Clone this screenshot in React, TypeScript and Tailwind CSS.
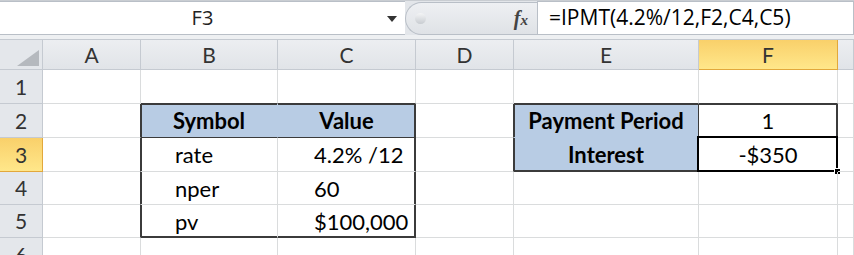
import React from "react";

const cellFont = { fontFamily: "Lato, 'Open Sans', sans-serif" };

type CellProps = { className?: string; children?: React.ReactNode };

// plain worksheet cell with gridlines on right/bottom
const Cell = ({ className = "", children }: CellProps) => (
  <div
    className={`relative flex items-center overflow-visible whitespace-nowrap border-r border-b border-[#dadcdd] text-[22px] text-black ${className}`}
    style={cellFont}
  >
    {children}
  </div>
);

const ColHead = ({ label, active }: { label: string; active?: boolean }) => (
  <div
    className={
      active
        ? "flex items-center justify-center border-r border-b border-[#e2a83b] bg-gradient-to-b from-[#f9d06a] to-[#ffe78a] text-[21px] text-[#333]"
        : "flex items-center justify-center border-r border-b border-[#c5cad1] bg-gradient-to-b from-[#eceef1] to-[#e1e4e8] text-[21px] text-[#333]"
    }
    style={cellFont}
  >
    {label}
  </div>
);

const RowHead = ({ label, active }: { label: string; active?: boolean }) => (
  <div
    className={
      active
        ? "flex items-center justify-center border-r border-b border-[#e2a83b] bg-gradient-to-b from-[#f9d06a] to-[#ffe78a] text-[21px] text-[#333]"
        : "flex items-center justify-center border-r border-b border-[#c5cad1] bg-[#e4e7eb] text-[21px] text-[#333]"
    }
    style={cellFont}
  >
    {label}
  </div>
);

export default function App() {
  return (
    <div className="w-[854px] h-[255px] overflow-hidden bg-white">
      {/* formula bar */}
      <div className="flex h-[35px] border-t border-[#c9cdd2] bg-[#e3e6ea]">
        <div
          className="relative flex w-[405px] items-center justify-center border-y border-[#b9bfc7] bg-white text-[20px] text-[#222]"
          style={{ fontFamily: "'Open Sans', 'Liberation Sans', sans-serif" }}
        >
          F3
          <svg
            className="absolute right-[8px] top-[14px]"
            width="10"
            height="6"
            viewBox="0 0 10 6"
          >
            <path d="M0 0h10L5 6z" fill="#333" />
          </svg>
        </div>
        <div className="flex w-[132px] items-center bg-[#e3e6ea]">
          <div className="flex h-[33px] w-full items-center rounded-l-full border-y border-l border-[#b9bfc7] bg-gradient-to-b from-[#eef0f3] to-[#dfe2e6] pl-[9px]">
            <div className="h-[11px] w-[11px] rounded-full bg-gradient-to-b from-[#f4f5f6] to-[#c8ccd1]" />
            <div className="flex-1" />
            <span
              className="mr-[9px] text-[20px] font-bold italic text-[#444]"
              style={{ fontFamily: "'Liberation Serif', serif" }}
            >
              f<span className="text-[15px]">x</span>
            </span>
          </div>
        </div>
        <div
          className="flex flex-1 items-center border border-[#b9bfc7] bg-white pl-[11px] text-[21px] text-black"
          style={{ fontFamily: "'Open Sans', 'Liberation Sans', sans-serif" }}
        >
          =IPMT(4.2%/12,F2,C4,C5)
        </div>
      </div>
      <div className="h-[5px] border-b border-[#c5cad1] bg-[#eef0f2]" />

      {/* sheet grid */}
      <div className="grid grid-cols-[43px_98px_137px_138px_98px_185px_139px_16px] grid-rows-[30px_34px_34px_34px_33px_33px_34px]">
        {/* header row */}
        <div className="flex items-end justify-end border-r border-b border-[#c5cad1] bg-[#e4e7eb] pb-[3px] pr-[3px]">
          <svg width="22" height="16" viewBox="0 0 22 16">
            <path d="M22 0V16H0z" fill="#b5b9be" />
          </svg>
        </div>
        <ColHead label="A" />
        <ColHead label="B" />
        <ColHead label="C" />
        <ColHead label="D" />
        <ColHead label="E" />
        <ColHead label="F" active />
        <ColHead label="" />

        {/* row 1 */}
        <RowHead label="1" />
        <Cell />
        <Cell className="border-b-[#3b3b3b]" />
        <Cell className="border-b-[#3b3b3b]" />
        <Cell />
        <Cell className="border-b-[#3b3b3b]" />
        <Cell className="border-b-[#3b3b3b]" />
        <Cell />

        {/* row 2 */}
        <RowHead label="2" />
        <Cell className="border-r-[#3b3b3b]" />
        <Cell className="justify-center border-r-[#b8cce4] border-b-[#3b3b3b] bg-[#b8cce4] font-bold shadow-[inset_1px_1px_0_#3b3b3b]">
          Symbol
        </Cell>
        <Cell className="justify-center border-r-[#3b3b3b] border-b-[#3b3b3b] bg-[#b8cce4] font-bold shadow-[inset_-1px_1px_0_#3b3b3b]">
          Value
        </Cell>
        <Cell className="border-r-[#3b3b3b]" />
        <Cell className="justify-center border-r-[#3b3b3b] border-b-[#b8cce4] bg-[#b8cce4] font-bold shadow-[inset_1px_1px_0_#3b3b3b]">
          Payment Period
        </Cell>
        <Cell className="justify-center border-r-[#3b3b3b] border-b-[#3b3b3b] shadow-[inset_-1px_1px_0_#3b3b3b]">
          1
        </Cell>
        <Cell />

        {/* row 3 */}
        <RowHead label="3" active />
        <Cell className="border-r-[#3b3b3b]" />
        <Cell className="pl-[34px] shadow-[inset_1px_0_0_#3b3b3b]">rate</Cell>
        <Cell className="pl-[36px] border-r-[#3b3b3b] shadow-[inset_-1px_0_0_#3b3b3b]">
          4.2% /12
        </Cell>
        <Cell className="border-r-[#3b3b3b]" />
        <Cell className="justify-center border-r-[#3b3b3b] border-b-[#3b3b3b] bg-[#b8cce4] font-bold shadow-[inset_1px_-1px_0_#3b3b3b]">
          Interest
        </Cell>
        <Cell className="justify-center border-r-[#3b3b3b] border-b-[#3b3b3b]">
          -$350
          {/* active cell selection */}
          <div className="pointer-events-none absolute -top-[2px] -left-[2px] -right-[1px] -bottom-[1px] border-2 border-black shadow-[inset_0_0_0_1px_#fff]" />
          <div className="absolute -right-[4px] -bottom-[4px] h-[7px] w-[7px] border border-white bg-black" />
        </Cell>
        <Cell />

        {/* row 4 */}
        <RowHead label="4" />
        <Cell className="border-r-[#3b3b3b]" />
        <Cell className="pl-[34px] shadow-[inset_1px_0_0_#3b3b3b]">nper</Cell>
        <Cell className="pl-[36px] border-r-[#3b3b3b] shadow-[inset_-1px_0_0_#3b3b3b]">
          60
        </Cell>
        <Cell />
        <Cell />
        <Cell />
        <Cell />

        {/* row 5 */}
        <RowHead label="5" />
        <Cell className="border-r-[#3b3b3b]" />
        <Cell className="pl-[34px] border-b-[#3b3b3b] shadow-[inset_1px_-1px_0_#3b3b3b]">
          pv
        </Cell>
        <Cell className="pl-[36px] border-r-[#3b3b3b] border-b-[#3b3b3b] shadow-[inset_-1px_-1px_0_#3b3b3b]">
          $100,000
        </Cell>
        <Cell />
        <Cell />
        <Cell />
        <Cell />

        {/* row 6, clipped by the window edge */}
        <RowHead label="6" />
        <Cell />
        <Cell />
        <Cell />
        <Cell />
        <Cell />
        <Cell />
        <Cell />
      </div>
    </div>
  );
}
